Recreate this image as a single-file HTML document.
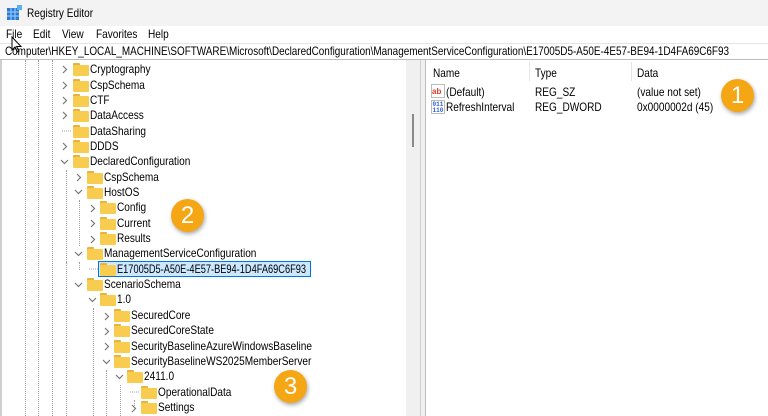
<!DOCTYPE html>
<html><head><meta charset="utf-8"><style>
*{margin:0;padding:0;box-sizing:border-box}
body{width:768px;height:416px;overflow:hidden;background:#fff;font-family:"Liberation Sans",sans-serif;font-size:12px;color:#000;position:relative}
.abs{position:absolute;white-space:nowrap}
.s{transform:scaleX(.84);transform-origin:0 0}
#title{left:0;top:0;width:768px;height:26px;background:#f3f3f3}
#menu{left:0;top:26px;width:768px;height:17px;background:#fff}
#addr{left:0;top:43px;width:768px;height:17px;background:#fff;border-top:1px solid #e5e5e5;border-bottom:1px solid #bdbdbd}
.row{position:absolute;height:15px;line-height:15px;white-space:nowrap}
.fold{position:absolute;top:1px;width:16px;height:13px}
.fold::before{content:"";position:absolute;left:0;top:0;width:7px;height:3px;background:#e8b33c;border-radius:1px 1px 0 0}
.fold::after{content:"";position:absolute;left:0;top:2px;width:16px;height:11px;background:#f8cd4f;border-radius:1px}
.txt{position:absolute;transform:scaleX(.84);transform-origin:0 0}
.vdot{position:absolute;width:1px;border-left:1px dotted #a0a0a0}
.badge{position:absolute;width:33px;height:33px;border-radius:50%;background:#f5a614;color:#fff;font-size:24px;line-height:33px;text-align:center;box-shadow:1px 2px 4px rgba(0,0,0,.35)}
</style></head><body>
<div id="title" class="abs">
<svg class="abs" style="left:6px;top:5px" width="16" height="16" viewBox="0 0 16 16"><rect x="1" y="3" width="12" height="12" fill="#2b7bd4"/><g stroke="#9fd0ff" stroke-width="1"><line x1="5" y1="3" x2="5" y2="15"/><line x1="9" y1="3" x2="9" y2="15"/><line x1="1" y1="7" x2="13" y2="7"/><line x1="1" y1="11" x2="13" y2="11"/></g><rect x="11" y="0" width="5" height="5" fill="#5ab0f0"/></svg>
<span class="abs s" style="left:27px;top:6px">Registry Editor</span>
</div>
<div id="menu" class="abs">
<span class="abs s" style="left:6px;top:1px">File</span>
<span class="abs s" style="left:33px;top:1px">Edit</span>
<span class="abs s" style="left:62px;top:1px">View</span>
<span class="abs s" style="left:96px;top:1px">Favorites</span>
<span class="abs s" style="left:148px;top:1px">Help</span>
</div>
<div id="addr" class="abs"><svg class="abs" style="left:0;top:0" width="768" height="15"><text x="5" y="11" font-family="Liberation Sans" font-size="12" textLength="724" lengthAdjust="spacingAndGlyphs">Computer\HKEY_LOCAL_MACHINE\SOFTWARE\Microsoft\DeclaredConfiguration\ManagementServiceConfiguration\E17005D5-A50E-4E57-BE94-1D4FA69C6F93</text></svg></div>
<svg class="abs" style="left:11px;top:36px" width="12" height="18" viewBox="0 0 12 18"><path d="M1 1 L1 14 L4 11 L6.5 16 L8 15.3 L5.6 10.5 L10 10.5 Z" fill="#fff" stroke="#000" stroke-width="1"/></svg>

<div class="abs" style="left:0;top:60px;width:2px;height:356px;background:#cfcfcf"></div>
<div class="vdot" style="left:25px;top:60px;height:356px"></div>
<div class="vdot" style="left:38px;top:60px;height:356px"></div>
<div class="vdot" style="left:52px;top:60px;height:356px"></div>
<div class="vdot" style="left:66px;top:170px;height:92px"></div>
<div class="vdot" style="left:66px;top:262px;height:154px"></div>
<div class="vdot" style="left:79px;top:200px;height:46px"></div>
<div class="vdot" style="left:79px;top:262px;height:8px"></div>
<div class="vdot" style="left:93px;top:308px;height:108px"></div>
<div class="vdot" style="left:106px;top:370px;height:46px"></div>
<div class="vdot" style="left:120px;top:385px;height:31px"></div>
<div class="vdot" style="left:134px;top:400px;height:6px"></div>

<svg class="abs" style="left:0;top:0" width="420" height="416">
<g fill="none" stroke="#777" stroke-width="1.2">
<path d="M63 66 l3.5 3.5 -3.5 3.5"/>
<path d="M63 82 l3.5 3.5 -3.5 3.5"/>
<path d="M63 97 l3.5 3.5 -3.5 3.5"/>
<path d="M63 112 l3.5 3.5 -3.5 3.5"/>
<path d="M63 143 l3.5 3.5 -3.5 3.5"/>
<path d="M61 160 l3.5 3.5 3.5 -3.5"/>
<path d="M77 174 l3.5 3.5 -3.5 3.5"/>
<path d="M75 190 l3.5 3.5 3.5 -3.5"/>
<path d="M91 205 l3.5 3.5 -3.5 3.5"/>
<path d="M91 220 l3.5 3.5 -3.5 3.5"/>
<path d="M91 236 l3.5 3.5 -3.5 3.5"/>
<path d="M75 252 l3.5 3.5 3.5 -3.5"/>
<path d="M75 283 l3.5 3.5 3.5 -3.5"/>
<path d="M89 298 l3.5 3.5 3.5 -3.5"/>
<path d="M105 313 l3.5 3.5 -3.5 3.5"/>
<path d="M105 328 l3.5 3.5 -3.5 3.5"/>
<path d="M105 343 l3.5 3.5 -3.5 3.5"/>
<path d="M103 360 l3.5 3.5 3.5 -3.5"/>
<path d="M116 375 l3.5 3.5 3.5 -3.5"/>
<path d="M132 405 l3.5 3.5 -3.5 3.5"/>
</g>
<g stroke="#a0a0a0" stroke-dasharray="1 1"><line x1="62" y1="131" x2="72" y2="131"/><line x1="89" y1="269" x2="99" y2="269"/><line x1="130" y1="392" x2="140" y2="392"/></g>
</svg>

<div class="row" style="top:62px;left:73px"><span class="fold"></span><span class="txt" style="left:17px">Cryptography</span></div>
<div class="row" style="top:78px;left:73px"><span class="fold"></span><span class="txt" style="left:17px">CspSchema</span></div>
<div class="row" style="top:93px;left:73px"><span class="fold"></span><span class="txt" style="left:17px">CTF</span></div>
<div class="row" style="top:108px;left:73px"><span class="fold"></span><span class="txt" style="left:17px">DataAccess</span></div>
<div class="row" style="top:124px;left:73px"><span class="fold"></span><span class="txt" style="left:17px">DataSharing</span></div>
<div class="row" style="top:139px;left:73px"><span class="fold"></span><span class="txt" style="left:17px">DDDS</span></div>
<div class="row" style="top:154px;left:73px"><span class="fold"></span><span class="txt" style="left:17px">DeclaredConfiguration</span></div>
<div class="row" style="top:170px;left:87px"><span class="fold"></span><span class="txt" style="left:17px">CspSchema</span></div>
<div class="row" style="top:185px;left:87px"><span class="fold"></span><span class="txt" style="left:17px">HostOS</span></div>
<div class="row" style="top:200px;left:100px"><span class="fold"></span><span class="txt" style="left:17px">Config</span></div>
<div class="row" style="top:216px;left:100px"><span class="fold"></span><span class="txt" style="left:17px">Current</span></div>
<div class="row" style="top:231px;left:100px"><span class="fold"></span><span class="txt" style="left:17px">Results</span></div>
<div class="row" style="top:246px;left:87px"><span class="fold"></span><span class="txt" style="left:17px">ManagementServiceConfiguration</span></div>
<div class="abs" style="left:98px;top:261px;width:213px;height:16px;background:#cce8ff;border:1px solid #0078d7"></div>
<div class="row" style="top:262px;left:100px"><span class="fold"></span><span class="txt" style="left:17px;transform:scaleX(.77)">E17005D5-A50E-4E57-BE94-1D4FA69C6F93</span></div>
<div class="row" style="top:277px;left:87px"><span class="fold"></span><span class="txt" style="left:17px">ScenarioSchema</span></div>
<div class="row" style="top:292px;left:100px"><span class="fold"></span><span class="txt" style="left:17px">1.0</span></div>
<div class="row" style="top:308px;left:114px"><span class="fold"></span><span class="txt" style="left:17px">SecuredCore</span></div>
<div class="row" style="top:323px;left:114px"><span class="fold"></span><span class="txt" style="left:17px">SecuredCoreState</span></div>
<div class="row" style="top:339px;left:114px"><span class="fold"></span><span class="txt" style="left:17px">SecurityBaselineAzureWindowsBaseline</span></div>
<div class="row" style="top:354px;left:114px"><span class="fold"></span><span class="txt" style="left:17px">SecurityBaselineWS2025MemberServer</span></div>
<div class="row" style="top:369px;left:127px"><span class="fold"></span><span class="txt" style="left:17px">2411.0</span></div>
<div class="row" style="top:385px;left:141px"><span class="fold"></span><span class="txt" style="left:17px">OperationalData</span></div>
<div class="row" style="top:400px;left:141px"><span class="fold"></span><span class="txt" style="left:17px">Settings</span></div>

<div class="abs" style="left:406px;top:60px;width:14px;height:356px;background:#f0f0f0"></div>
<div class="abs" style="left:412px;top:114px;width:2px;height:33px;background:#8a8a8a"></div>
<div class="abs" style="left:420px;top:60px;width:1px;height:356px;background:#cfcfcf"></div>
<div class="abs" style="left:421px;top:60px;width:4px;height:356px;background:#f0f0f0"></div>
<div class="abs" style="left:425px;top:60px;width:1px;height:356px;background:#bdbdbd"></div>

<span class="abs s" style="left:433px;top:66px">Name</span>
<span class="abs s" style="left:535px;top:66px">Type</span>
<span class="abs s" style="left:637px;top:66px">Data</span>
<div class="abs" style="left:529px;top:62px;width:1px;height:19px;background:#e5e5e5"></div>
<div class="abs" style="left:631px;top:62px;width:1px;height:19px;background:#e5e5e5"></div>
<svg class="abs" style="left:431px;top:84px" width="14" height="14" viewBox="0 0 14 14"><rect x="0.5" y="0.5" width="13" height="13" fill="#fff" stroke="#bbb"/><text x="1" y="10" font-family="Liberation Sans" font-size="8" font-weight="bold" fill="#d83b2b">ab</text></svg>
<span class="abs s" style="left:446px;top:85px">(Default)</span>
<span class="abs s" style="left:535px;top:85px">REG_SZ</span>
<span class="abs s" style="left:637px;top:85px">(value not set)</span>
<svg class="abs" style="left:431px;top:100px" width="14" height="14" viewBox="0 0 14 14"><rect x="0.5" y="0.5" width="13" height="13" fill="#fff" stroke="#bbb"/><text x="1.5" y="6" font-family="Liberation Mono" font-size="6" font-weight="bold" fill="#2a5bd7">011</text><text x="1.5" y="12" font-family="Liberation Mono" font-size="6" font-weight="bold" fill="#2a5bd7">110</text></svg>
<span class="abs s" style="left:446px;top:100px">RefreshInterval</span>
<span class="abs s" style="left:535px;top:100px">REG_DWORD</span>
<span class="abs s" style="left:637px;top:100px">0x0000002d (45)</span>

<div class="badge" style="left:721px;top:79px">1</div>
<div class="badge" style="left:171px;top:199px">2</div>
<div class="badge" style="left:274px;top:370px">3</div>
</body></html>
